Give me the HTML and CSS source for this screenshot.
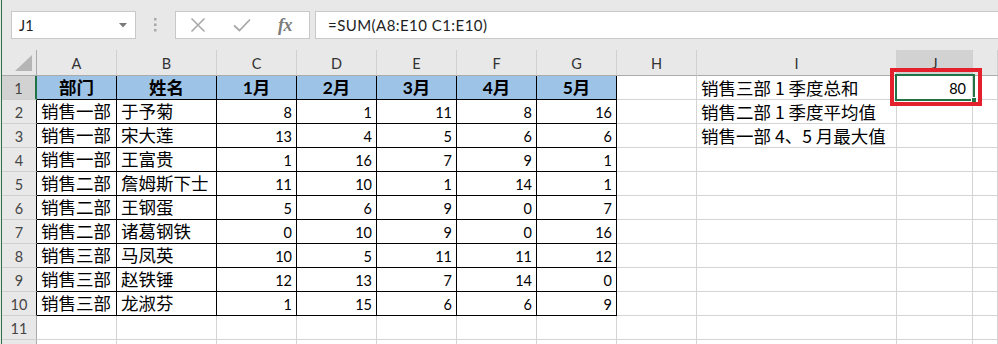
FILE: index.html
```html
<!DOCTYPE html>
<html lang="zh-CN">
<head>
<meta charset="utf-8">
<title>Excel</title>
<link rel="stylesheet" href="styles.css">
</head>
<body>
<div class="app">
  <div class="main">
    <div class="fbar">
      <div class="namebox"><span class="nb-text">J1</span><svg class="caret" width="8" height="5" viewBox="0 0 8 5"><path d="M0 0H8L4 4.5Z" fill="#7a7a7a"/></svg></div>
      <div class="grip"><svg width="3" height="14" viewBox="0 0 3 14"><rect x="0" y="0" width="2.5" height="2.5" fill="#a8a8a8"/><rect x="0" y="5.5" width="2.5" height="2.5" fill="#a8a8a8"/><rect x="0" y="11" width="2.5" height="2.5" fill="#a8a8a8"/></svg></div>
      <div class="fxbox">
        <svg class="ic-x" width="16" height="16" viewBox="0 0 16 16"><path d="M1.5 1.5L14.5 14.5M14.5 1.5L1.5 14.5" stroke="#a9a9a9" stroke-width="1.6" fill="none"/></svg>
        <svg class="ic-ok" width="18" height="14" viewBox="0 0 18 14"><path d="M1 7.5L6.5 12.5L17 1.5" stroke="#a9a9a9" stroke-width="1.8" fill="none"/></svg>
        <span class="fx">fx</span>
      </div>
      <div class="formula">=SUM(A8:E10 C1:E10)</div>
    </div>
    <div class="sheet">
      <!-- column headers -->
      <div class="corner"><svg width="18" height="17" viewBox="0 0 18 17"><path d="M17 0V16H0Z" fill="#b5b5b5"/></svg></div>
      <div class="ch">A</div><div class="ch">B</div><div class="ch">C</div><div class="ch">D</div><div class="ch">E</div><div class="ch">F</div><div class="ch">G</div><div class="ch">H</div><div class="ch">I</div><div class="ch sel">J</div><div class="ch"></div>

      <!-- row 1 -->
      <div class="rh rsel">1</div>
      <div class="c tb hd">部门</div><div class="c tb hd">姓名</div><div class="c tb hd">1月</div><div class="c tb hd">2月</div><div class="c tb hd">3月</div><div class="c tb hd">4月</div><div class="c tb hd">5月</div>
      <div class="c"></div><div class="c tx cj">销售三部 1 季度总和</div>
      <div class="c n active">80<div class="selbox"><span class="handle"></span></div><div class="redbox"></div></div>
      <div class="c"></div>

      <!-- row 2 -->
      <div class="rh rt">2</div>
      <div class="c tb tx">销售一部</div><div class="c tb tx">于予菊</div><div class="c tb n">8</div><div class="c tb n">1</div><div class="c tb n">11</div><div class="c tb n">8</div><div class="c tb n">16</div>
      <div class="c"></div><div class="c tx cj">销售二部 1 季度平均值</div><div class="c"></div><div class="c"></div>

      <!-- row 3 -->
      <div class="rh rt">3</div>
      <div class="c tb tx">销售一部</div><div class="c tb tx">宋大莲</div><div class="c tb n">13</div><div class="c tb n">4</div><div class="c tb n">5</div><div class="c tb n">6</div><div class="c tb n">6</div>
      <div class="c"></div><div class="c tx cj">销售一部 4、5 月最大值</div><div class="c"></div><div class="c"></div>

      <!-- row 4 -->
      <div class="rh rt">4</div>
      <div class="c tb tx">销售一部</div><div class="c tb tx">王富贵</div><div class="c tb n">1</div><div class="c tb n">16</div><div class="c tb n">7</div><div class="c tb n">9</div><div class="c tb n">1</div>
      <div class="c"></div><div class="c"></div><div class="c"></div><div class="c"></div>

      <!-- row 5 -->
      <div class="rh rt">5</div>
      <div class="c tb tx">销售二部</div><div class="c tb tx">詹姆斯下士</div><div class="c tb n">11</div><div class="c tb n">10</div><div class="c tb n">1</div><div class="c tb n">14</div><div class="c tb n">1</div>
      <div class="c"></div><div class="c"></div><div class="c"></div><div class="c"></div>

      <!-- row 6 -->
      <div class="rh rt">6</div>
      <div class="c tb tx">销售二部</div><div class="c tb tx">王钢蛋</div><div class="c tb n">5</div><div class="c tb n">6</div><div class="c tb n">9</div><div class="c tb n">0</div><div class="c tb n">7</div>
      <div class="c"></div><div class="c"></div><div class="c"></div><div class="c"></div>

      <!-- row 7 -->
      <div class="rh rt">7</div>
      <div class="c tb tx">销售二部</div><div class="c tb tx">诸葛钢铁</div><div class="c tb n">0</div><div class="c tb n">10</div><div class="c tb n">9</div><div class="c tb n">0</div><div class="c tb n">16</div>
      <div class="c"></div><div class="c"></div><div class="c"></div><div class="c"></div>

      <!-- row 8 -->
      <div class="rh rt">8</div>
      <div class="c tb tx">销售三部</div><div class="c tb tx">马凤英</div><div class="c tb n">10</div><div class="c tb n">5</div><div class="c tb n">11</div><div class="c tb n">11</div><div class="c tb n">12</div>
      <div class="c"></div><div class="c"></div><div class="c"></div><div class="c"></div>

      <!-- row 9 -->
      <div class="rh rt">9</div>
      <div class="c tb tx">销售三部</div><div class="c tb tx">赵铁锤</div><div class="c tb n">12</div><div class="c tb n">13</div><div class="c tb n">7</div><div class="c tb n">14</div><div class="c tb n">0</div>
      <div class="c"></div><div class="c"></div><div class="c"></div><div class="c"></div>

      <!-- row 10 -->
      <div class="rh rt">10</div>
      <div class="c tb tx">销售三部</div><div class="c tb tx">龙淑芬</div><div class="c tb n">1</div><div class="c tb n">15</div><div class="c tb n">6</div><div class="c tb n">6</div><div class="c tb n">9</div>
      <div class="c"></div><div class="c"></div><div class="c"></div><div class="c"></div>

      <!-- row 11 -->
      <div class="rh">11</div>
      <div class="c"></div><div class="c"></div><div class="c"></div><div class="c"></div><div class="c"></div><div class="c"></div><div class="c"></div><div class="c"></div><div class="c"></div><div class="c"></div><div class="c"></div>

      <!-- row 12 (only its top edge is visible) -->
      <div class="rh"></div>
      <div class="c"></div><div class="c"></div><div class="c"></div><div class="c"></div><div class="c"></div><div class="c"></div><div class="c"></div><div class="c"></div><div class="c"></div><div class="c"></div><div class="c"></div>
    </div>
  </div>
</div>
</body>
</html>
```

FILE: styles.css
```css
* { box-sizing: border-box; }

html, body {
  margin: 0;
  padding: 0;
  background: #ffffff;
}

body {
  font-family: "Lato", "Noto Sans CJK SC", sans-serif;
  color: #000;
}

.app {
  width: 998px;
  height: 344px;
  overflow: hidden;
  padding-left: 1px;
  background: #e8e8e8;
}

.main {
  height: 100%;
  border-left: 1px solid #2f6e45;
  background: #ffffff;
  overflow: hidden;
}

/* ---------- formula bar ---------- */
.fbar {
  height: 50px;
  background: #e8e8e8;
  display: flex;
  align-items: flex-start;
  padding-top: 11px;
}

.namebox {
  margin-left: 9px;
  width: 125px;
  height: 28px;
  background: #fff;
  border: 1px solid #c8c8c8;
  display: flex;
  align-items: center;
  justify-content: space-between;
  padding: 0 8px 0 7px;
  font-family: "Lato", sans-serif;
  font-size: 14.5px;
  color: #222;
}

.grip {
  width: 39px;
  height: 28px;
  display: flex;
  align-items: center;
  justify-content: center;
}

.fxbox {
  width: 135px;
  height: 28px;
  background: #fff;
  border: 1px solid #c8c8c8;
  display: flex;
  align-items: center;
  padding-left: 14px;
}

.ic-x { margin-right: 27px; }
.ic-ok { margin-right: 27px; }

.fx {
  font-family: "Liberation Serif", "DejaVu Serif", serif;
  font-style: italic;
  font-weight: bold;
  font-size: 18px;
  color: #7b7b7b;
  letter-spacing: -0.5px;
}

.formula {
  margin-left: 5px;
  flex: 1;
  height: 28px;
  background: #fff;
  border: 1px solid #c8c8c8;
  border-right: none;
  display: flex;
  align-items: center;
  padding-left: 12px;
  font-family: "Lato", sans-serif;
  font-size: 15px;
  letter-spacing: 0.45px;
  color: #222;
}

/* ---------- sheet grid ---------- */
.sheet {
  display: grid;
  grid-template-columns: 35px 80px 100px 80px 80px 80px 80px 80px 80px 200px 76px 1fr;
  grid-template-rows: 26px repeat(11, 24px) 24px;
  height: 294px;
  overflow: hidden;
}

.corner {
  background: #e8e8e8;
  border-right: 1px solid #ababab;
  border-bottom: 1px solid #ababab;
  display: flex;
  align-items: flex-end;
  justify-content: flex-end;
  padding: 0 3px 3px 0;
}

.ch {
  background: #e8e8e8;
  border-right: 1px solid #d0d0d0;
  border-bottom: 1px solid #ababab;
  display: flex;
  align-items: center;
  justify-content: center;
  font-family: "Lato", sans-serif;
  font-size: 14.5px;
  color: #333;
  padding-top: 2px;
}

.ch.sel {
  background: #d2d2d2;
  border-bottom: 2px solid #217346;
}

.rh {
  background: #e8e8e8;
  border-right: 1px solid #ababab;
  border-bottom: 1px solid #d0d0d0;
  display: flex;
  align-items: center;
  justify-content: center;
  font-family: "Lato", sans-serif;
  font-size: 14.5px;
  color: #444;
  padding-top: 1px;
}

.rh.rt { border-right-color: #000; }

.rh.rsel {
  background: #d2d2d2;
  border-right: 2px solid #217346;
}

.c {
  border-right: 1px solid #d4d4d4;
  border-bottom: 1px solid #d4d4d4;
  display: flex;
  align-items: center;
  white-space: nowrap;
  overflow: visible;
  line-height: 1;
}

.c.tb {
  border-right-color: #000;
  border-bottom-color: #000;
}

.hd {
  background: #9dc3e6;
  justify-content: center;
  font-weight: bold;
  font-size: 17.5px;
}

.tx {
  font-size: 17.5px;
  padding-left: 4px;
}

.cj {
  font-family: "Noto Sans CJK SC", sans-serif;
}

.n {
  justify-content: flex-end;
  padding-right: 4px;
  padding-top: 3px;
  font-family: "Lato", sans-serif;
  font-size: 14.5px;
}

.active {
  position: relative;
  padding-right: 6px;
}

.selbox {
  position: absolute;
  left: -2px;
  top: -2px;
  width: 80px;
  height: 27px;
  border: 2px solid #217346;
  z-index: 2;
}

.handle {
  position: absolute;
  right: -4px;
  bottom: -4px;
  width: 6px;
  height: 6px;
  background: #217346;
  border: 1px solid #fff;
}

.redbox {
  position: absolute;
  left: -7px;
  top: -8px;
  width: 92px;
  height: 38px;
  border: 4px solid #e3202b;
  z-index: 3;
}
```
